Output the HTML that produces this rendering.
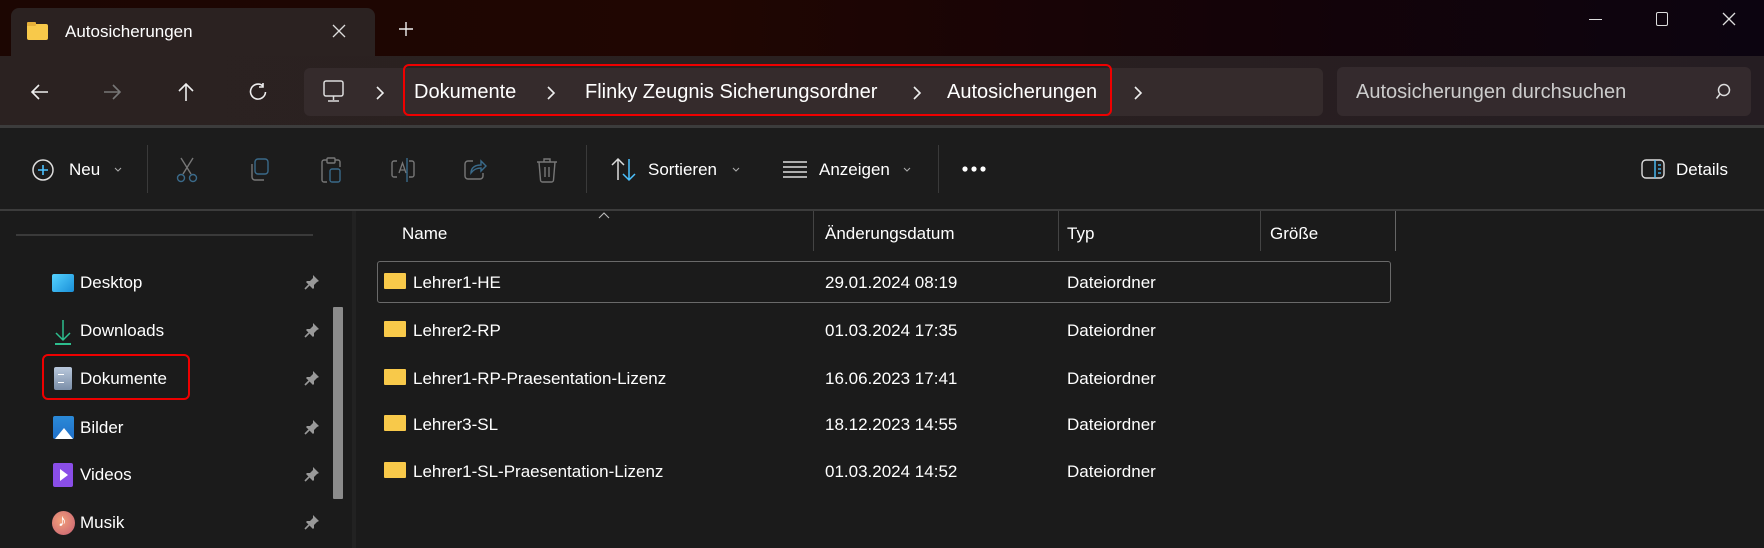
<!DOCTYPE html>
<html><head><meta charset="utf-8"><style>
*{margin:0;padding:0;box-sizing:border-box}
body{width:1764px;height:548px;overflow:hidden;background:#1b1b1b;font-family:"Liberation Sans",sans-serif;color:#fff;position:relative}
.a{position:absolute}
.t{position:absolute;white-space:nowrap}
svg{position:absolute;overflow:visible}
</style></head><body>
<!-- title bar -->
<div class="a" style="left:0;top:0;width:1764px;height:56px;background:linear-gradient(90deg,#1c0602 0%,#200602 40%,#140308 70%,#0c0410 100%)"></div>
<div class="a" style="left:11px;top:8px;width:364px;height:50px;background:#2b2221;border-radius:8px 8px 0 0"></div>
<div class="a" style="left:27px;top:24px;width:21px;height:16px;background:#f8c94a;border-radius:2px"></div>
<div class="a" style="left:27px;top:22px;width:9px;height:4px;background:#e6b03a;border-radius:1px"></div>
<div class="t" style="left:65px;top:22px;font-size:17px">Autosicherungen</div>
<svg style="left:332px;top:24px" width="14" height="14"><path d="M1 1l12 12M13 1L1 13" stroke="#ddd" stroke-width="1.3"/></svg>
<svg style="left:398px;top:21px" width="16" height="16"><path d="M8 1v14M1 8h14" stroke="#eee" stroke-width="1.4"/></svg>
<div class="a" style="left:1589px;top:19px;width:13px;height:1px;background:#ddd"></div>
<div class="a" style="left:1656px;top:12px;width:12px;height:14px;border:1.3px solid #ddd;border-radius:2px"></div>
<svg style="left:1722px;top:12px" width="14" height="14"><path d="M1 1l12 12M13 1L1 13" stroke="#ddd" stroke-width="1.3"/></svg>
<!-- nav bar -->
<div class="a" style="left:0;top:56px;width:1764px;height:70px;background:linear-gradient(90deg,#2b2221,#2a2020 50%,#251d22)"></div>
<svg style="left:30px;top:82px" width="20" height="20"><path d="M18 10H2M9 3L2 10l7 7" stroke="#eee" stroke-width="1.6" fill="none"/></svg>
<svg style="left:102px;top:82px" width="20" height="20"><path d="M2 10h16M11 3l7 7-7 7" stroke="#777" stroke-width="1.6" fill="none"/></svg>
<svg style="left:176px;top:82px" width="20" height="20"><path d="M10 19V2M3 9l7-7 7 7" stroke="#eee" stroke-width="1.6" fill="none"/></svg>
<svg style="left:248px;top:82px" width="20" height="20"><path d="M15 4A7.5 7.5 0 1 0 17.5 10M15 1v4h-4" stroke="#eee" stroke-width="1.6" fill="none"/></svg>
<div class="a" style="left:304px;top:68px;width:1019px;height:48px;background:#352b2c;border-radius:6px"></div>
<svg style="left:322px;top:80px" width="24" height="24"><rect x="2" y="1" width="19" height="15" rx="2" stroke="#ddd" stroke-width="1.5" fill="none"/><path d="M11.5 16v4M6 21h11" stroke="#ddd" stroke-width="1.5"/></svg>
<svg style="left:376px;top:86px" width="8" height="14"><path d="M1 1l6 6-6 6" stroke="#eee" stroke-width="1.6" fill="none"/></svg>
<div class="a" style="left:403px;top:64px;width:709px;height:52px;border:2px solid #e00;border-radius:6px"></div>
<div class="t" style="left:414px;top:81px;font-size:20px">Dokumente</div>
<svg style="left:547px;top:86px" width="8" height="14"><path d="M1 1l6 6-6 6" stroke="#eee" stroke-width="1.6" fill="none"/></svg>
<div class="t" style="left:585px;top:81px;font-size:20px">Flinky Zeugnis Sicherungsordner</div>
<svg style="left:913px;top:86px" width="8" height="14"><path d="M1 1l6 6-6 6" stroke="#eee" stroke-width="1.6" fill="none"/></svg>
<div class="t" style="left:947px;top:81px;font-size:20px">Autosicherungen</div>
<svg style="left:1134px;top:86px" width="8" height="14"><path d="M1 1l6 6-6 6" stroke="#eee" stroke-width="1.6" fill="none"/></svg>
<div class="a" style="left:1337px;top:67px;width:414px;height:49px;background:#342a2d;border-radius:6px"></div>
<div class="t" style="left:1356px;top:81px;font-size:20px;color:#ccc">Autosicherungen durchsuchen</div>
<svg style="left:1715px;top:83px" width="18" height="18"><circle cx="9" cy="7" r="5.5" stroke="#ddd" stroke-width="1.5" fill="none"/><path d="M5 11l-3.5 4.5" stroke="#ddd" stroke-width="1.5"/></svg>
<div class="a" style="left:0;top:125px;width:1764px;height:3px;background:#3c3c3c"></div>
<!-- command bar -->
<div class="a" style="left:0;top:128px;width:1764px;height:81px;background:#1c1c1c"></div>
<svg style="left:31px;top:158px" width="24" height="24"><circle cx="12" cy="12" r="10" stroke="#ddd" stroke-width="1.5" fill="none"/><path d="M12 7v10M7 12h10" stroke="#4cc2ff" stroke-width="1.6"/></svg>
<div class="t" style="left:69px;top:160px;font-size:17px">Neu</div>
<svg style="left:114px;top:167px" width="8" height="5"><path d="M1 1l3 3 3-3" stroke="#aaa" stroke-width="1.1" fill="none"/></svg>
<div class="a" style="left:147px;top:145px;width:1px;height:48px;background:#3a3a3a"></div>
<svg style="left:175px;top:157px" width="24" height="26"><path d="M6 1l10 16M18 1L8 17" stroke="#777" stroke-width="1.4"/><circle cx="6" cy="21" r="3.5" stroke="#3a6a8a" stroke-width="1.4" fill="none"/><circle cx="18" cy="21" r="3.5" stroke="#3a6a8a" stroke-width="1.4" fill="none"/></svg>
<svg style="left:248px;top:158px" width="24" height="24"><rect x="7" y="1" width="13" height="15" rx="3" stroke="#3a6a8a" stroke-width="1.4" fill="none"/><path d="M4 6v13a3 3 0 0 0 3 3h9" stroke="#777" stroke-width="1.4" fill="none"/></svg>
<svg style="left:319px;top:156px" width="24" height="28"><path d="M8 4H5a2 2 0 0 0-2 2v18a2 2 0 0 0 2 2h3M16 4h3a2 2 0 0 1 2 2v5" stroke="#777" stroke-width="1.4" fill="none"/><rect x="8" y="2" width="8" height="5" rx="1" stroke="#777" stroke-width="1.4" fill="none"/><rect x="11" y="13" width="10" height="13" rx="2" stroke="#3a6a8a" stroke-width="1.4" fill="none"/></svg>
<svg style="left:390px;top:157px" width="26" height="26"><path d="M7 4H4a2 2 0 0 0-2 2v12a2 2 0 0 0 2 2h3M19 4h3a2 2 0 0 1 2 2v12a2 2 0 0 1-2 2h-3" stroke="#777" stroke-width="1.4" fill="none"/><path d="M9 16l3.5-10 3.5 10M10 13h5" stroke="#777" stroke-width="1.3" fill="none"/><path d="M17 1v24" stroke="#3a6a8a" stroke-width="1.4"/></svg>
<svg style="left:463px;top:157px" width="24" height="24"><path d="M10 4H5a3 3 0 0 0-3 3v12a3 3 0 0 0 3 3h12a3 3 0 0 0 3-3v-3" stroke="#777" stroke-width="1.4" fill="none"/><path d="M8 16c0-6 5-8 10-8V4l5 5-5 5v-3c-4 0-7 1-10 5z" stroke="#3a6a8a" stroke-width="1.4" fill="none"/></svg>
<svg style="left:536px;top:157px" width="22" height="26"><path d="M1 5h20M8 5V2h6v3M3 5l1.5 18a2 2 0 0 0 2 2h9a2 2 0 0 0 2-2L19 5M9 10v10M13 10v10" stroke="#777" stroke-width="1.4" fill="none"/></svg>
<div class="a" style="left:586px;top:145px;width:1px;height:48px;background:#3a3a3a"></div>
<svg style="left:611px;top:157px" width="26" height="26"><path d="M7 23V2M1 8l6-6 6 6" stroke="#ddd" stroke-width="1.5" fill="none"/><path d="M18 2v21M12 17l6 6 6-6" stroke="#4cc2ff" stroke-width="1.5" fill="none"/></svg>
<div class="t" style="left:648px;top:160px;font-size:17px">Sortieren</div>
<svg style="left:732px;top:167px" width="8" height="5"><path d="M1 1l3 3 3-3" stroke="#aaa" stroke-width="1.1" fill="none"/></svg>
<svg style="left:782px;top:161px" width="26" height="18"><path d="M1 1h24M1 6h24M1 11h24M1 16h24" stroke="#ddd" stroke-width="1.4"/></svg>
<div class="t" style="left:819px;top:160px;font-size:17px">Anzeigen</div>
<svg style="left:903px;top:167px" width="8" height="5"><path d="M1 1l3 3 3-3" stroke="#aaa" stroke-width="1.1" fill="none"/></svg>
<div class="a" style="left:938px;top:145px;width:1px;height:48px;background:#3a3a3a"></div>
<svg style="left:962px;top:166px" width="26" height="6"><circle cx="3" cy="3" r="2.6" fill="#fff"/><circle cx="12" cy="3" r="2.6" fill="#fff"/><circle cx="21" cy="3" r="2.6" fill="#fff"/></svg>
<svg style="left:1641px;top:159px" width="24" height="20"><rect x="1" y="1" width="22" height="18" rx="4" stroke="#ddd" stroke-width="1.4" fill="none"/><path d="M14 1v18" stroke="#4cc2ff" stroke-width="1.4"/><path d="M17 6h3M17 10h3M17 14h3" stroke="#4cc2ff" stroke-width="1.3"/></svg>
<div class="t" style="left:1676px;top:160px;font-size:17px">Details</div>
<div class="a" style="left:0;top:209px;width:1764px;height:2px;background:#3c3c3c"></div>
<!-- sidebar -->
<div class="a" style="left:352px;top:211px;width:4px;height:337px;background:#222"></div>
<div class="a" style="left:16px;top:234px;width:297px;height:2px;background:#3a3a3a"></div>
<div class="a" style="left:333px;top:307px;width:10px;height:192px;background:#8b8b8b;border-radius:1px"></div>
<div class="a" style="left:52px;top:274px;width:22px;height:18px;background:linear-gradient(135deg,#55d3ff,#1a8fd8);border-radius:2px"></div>
<div class="t" style="left:80px;top:273px;font-size:17px">Desktop</div>
<svg style="left:54px;top:319px" width="18" height="26"><path d="M9 1v20M2 14l7 7 7-7" stroke="#2dbe8e" stroke-width="1.5" fill="none"/><path d="M1 25h16" stroke="#2dbe8e" stroke-width="2"/></svg>
<div class="t" style="left:80px;top:321px;font-size:17px">Downloads</div>
<div class="a" style="left:42px;top:354px;width:148px;height:46px;border:2px solid #e00;border-radius:6px"></div>
<div class="a" style="left:54px;top:367px;width:18px;height:23px;background:linear-gradient(#b9c8dc,#7b8ea8);border-radius:2px"></div>
<div class="a" style="left:58px;top:374px;width:6px;height:9px;border-top:1.5px solid #fff;border-bottom:1.5px solid #fff"></div>
<div class="t" style="left:80px;top:369px;font-size:17px">Dokumente</div>
<div class="a" style="left:53px;top:416px;width:21px;height:23px;background:linear-gradient(#2b8ad8,#1f6fc8);border-radius:2px"></div>
<div class="a" style="left:55px;top:428px;width:0;height:0;border-left:9px solid transparent;border-right:9px solid transparent;border-bottom:11px solid #fff"></div>
<div class="t" style="left:80px;top:418px;font-size:17px">Bilder</div>
<div class="a" style="left:53px;top:463px;width:20px;height:24px;background:#8a4ee8;border-radius:2px"></div>
<div class="a" style="left:60px;top:469px;width:0;height:0;border-top:6px solid transparent;border-bottom:6px solid transparent;border-left:8px solid #fff"></div>
<div class="t" style="left:80px;top:465px;font-size:17px">Videos</div>
<div class="a" style="left:52px;top:511px;width:23px;height:24px;background:radial-gradient(circle at 40% 40%,#f2a07a,#c65e72);border-radius:50%"></div>
<div class="t" style="left:58px;top:511px;font-size:17px">♪</div>
<div class="t" style="left:80px;top:513px;font-size:17px">Musik</div>
<svg style="left:304px;top:274px" width="16" height="16"><path d="M9 1l6 6-2 1-3 3 0 3-1 1-7-7 1-1h3l3-3z" fill="#999"/><path d="M5 11l-4 4" stroke="#999" stroke-width="1.6"/></svg>
<svg style="left:304px;top:322px" width="16" height="16"><path d="M9 1l6 6-2 1-3 3 0 3-1 1-7-7 1-1h3l3-3z" fill="#999"/><path d="M5 11l-4 4" stroke="#999" stroke-width="1.6"/></svg>
<svg style="left:304px;top:370px" width="16" height="16"><path d="M9 1l6 6-2 1-3 3 0 3-1 1-7-7 1-1h3l3-3z" fill="#999"/><path d="M5 11l-4 4" stroke="#999" stroke-width="1.6"/></svg>
<svg style="left:304px;top:419px" width="16" height="16"><path d="M9 1l6 6-2 1-3 3 0 3-1 1-7-7 1-1h3l3-3z" fill="#999"/><path d="M5 11l-4 4" stroke="#999" stroke-width="1.6"/></svg>
<svg style="left:304px;top:466px" width="16" height="16"><path d="M9 1l6 6-2 1-3 3 0 3-1 1-7-7 1-1h3l3-3z" fill="#999"/><path d="M5 11l-4 4" stroke="#999" stroke-width="1.6"/></svg>
<svg style="left:304px;top:514px" width="16" height="16"><path d="M9 1l6 6-2 1-3 3 0 3-1 1-7-7 1-1h3l3-3z" fill="#999"/><path d="M5 11l-4 4" stroke="#999" stroke-width="1.6"/></svg>
<!-- list header -->
<svg style="left:598px;top:212px" width="12" height="7"><path d="M1 6l5-5 5 5" stroke="#bbb" stroke-width="1.1" fill="none"/></svg>
<div class="t" style="left:402px;top:224px;font-size:17px">Name</div>
<div class="t" style="left:825px;top:224px;font-size:17px">Änderungsdatum</div>
<div class="t" style="left:1067px;top:224px;font-size:17px">Typ</div>
<div class="t" style="left:1270px;top:224px;font-size:17px">Größe</div>
<div class="a" style="left:813px;top:211px;width:1px;height:40px;background:#444"></div>
<div class="a" style="left:1058px;top:211px;width:1px;height:40px;background:#444"></div>
<div class="a" style="left:1260px;top:211px;width:1px;height:40px;background:#444"></div>
<div class="a" style="left:1395px;top:211px;width:1px;height:40px;background:#666"></div>
<div class="a" style="left:377px;top:261px;width:1014px;height:42px;border:1px solid #6a6a6a;border-radius:3px"></div>
<!-- rows -->
<div class="a" style="left:384px;top:273px;width:22px;height:16px;background:#f8c94a;border-radius:1px"></div>
<div class="t" style="left:413px;top:273px;font-size:17px">Lehrer1-HE</div>
<div class="t" style="left:825px;top:273px;font-size:17px">29.01.2024 08:19</div>
<div class="t" style="left:1067px;top:273px;font-size:17px">Dateiordner</div>
<div class="a" style="left:384px;top:321px;width:22px;height:16px;background:#f8c94a;border-radius:1px"></div>
<div class="t" style="left:413px;top:321px;font-size:17px">Lehrer2-RP</div>
<div class="t" style="left:825px;top:321px;font-size:17px">01.03.2024 17:35</div>
<div class="t" style="left:1067px;top:321px;font-size:17px">Dateiordner</div>
<div class="a" style="left:384px;top:369px;width:22px;height:16px;background:#f8c94a;border-radius:1px"></div>
<div class="t" style="left:413px;top:369px;font-size:17px">Lehrer1-RP-Praesentation-Lizenz</div>
<div class="t" style="left:825px;top:369px;font-size:17px">16.06.2023 17:41</div>
<div class="t" style="left:1067px;top:369px;font-size:17px">Dateiordner</div>
<div class="a" style="left:384px;top:415px;width:22px;height:16px;background:#f8c94a;border-radius:1px"></div>
<div class="t" style="left:413px;top:415px;font-size:17px">Lehrer3-SL</div>
<div class="t" style="left:825px;top:415px;font-size:17px">18.12.2023 14:55</div>
<div class="t" style="left:1067px;top:415px;font-size:17px">Dateiordner</div>
<div class="a" style="left:384px;top:462px;width:22px;height:16px;background:#f8c94a;border-radius:1px"></div>
<div class="t" style="left:413px;top:462px;font-size:17px">Lehrer1-SL-Praesentation-Lizenz</div>
<div class="t" style="left:825px;top:462px;font-size:17px">01.03.2024 14:52</div>
<div class="t" style="left:1067px;top:462px;font-size:17px">Dateiordner</div>
</body></html>
